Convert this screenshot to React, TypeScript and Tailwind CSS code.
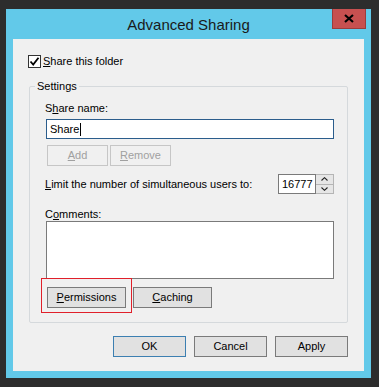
import React from "react";

function Btn({ children, w = 73, disabled = false, primary = false }: { children: React.ReactNode; w?: number; disabled?: boolean; primary?: boolean }) {
  const base = "h-[21px] flex items-center justify-center text-[11px] leading-none";
  let cls = "";
  if (disabled) cls = "bg-[#f0f0f0] border border-[#c6c6c6] text-[#a0a0a0]";
  else if (primary) cls = "bg-[#e1e1e1] border border-[#3c7fb1] text-black";
  else cls = "bg-[#e1e1e1] border border-[#7a7a7a] text-black";
  return (
    <div className={`${base} ${cls}`} style={{ width: w }}>
      {children}
    </div>
  );
}

export default function App() {
  return (
    <div className="w-[379px] h-[387px] bg-[#2d2d2d] pt-[9px] pl-[6px] font-['Liberation_Sans',Arial,sans-serif] text-black">
      <div className="w-[365px] h-[369px] bg-[#62c9e9] flex flex-col px-[7px] pb-[7px]">
        {/* Title bar */}
        <div className="relative h-[30px] flex items-center justify-center">
          <span className="text-[15px] leading-none text-[#1a1a1a] pt-[1px]">Advanced Sharing</span>
          <div className="absolute right-[-2px] top-[0px] w-[34px] h-[20px] bg-[#c75050] border border-[#9b3c3c] border-t-0 flex items-center justify-center">
            <svg width="10" height="9" viewBox="0 0 10 9">
              <path d="M1 1 L9 8 M9 1 L1 8" stroke="#000" strokeWidth="2.2" />
            </svg>
          </div>
        </div>
        {/* Client */}
        <div className="flex-1 bg-[#f0f0f0] flex flex-col">
          <div className="mt-[16px] ml-[15px] flex items-center h-[13px]">
            <div className="w-[13px] h-[13px] bg-white border border-[#333] flex items-center justify-center">
              <svg width="11" height="11" viewBox="0 0 11 11">
                <path d="M1.5 5.5 L4.2 8.5 L9.5 1.8" stroke="#000" strokeWidth="1.8" fill="none" />
              </svg>
            </div>
            <span className="ml-[2px] text-[11px] leading-none">
              <u>S</u>hare this folder
            </span>
          </div>

          {/* Group box */}
          <div className="relative mt-[18px] ml-[16px] w-[319px] h-[237px] border border-[#d5d9dc] rounded-[2px] flex flex-col pl-[15px]">
            <span className="absolute left-[5px] top-[-7px] px-[2px] bg-[#f0f0f0] text-[11px] leading-[13px]">Settings</span>
            <div className="mt-[14px] h-[15px] text-[11px] leading-[15px]">
              S<u>h</u>are name:
            </div>
            <div className="mt-[3px] ml-[1px] w-[288px] h-[20px] bg-white border border-[#2b5d8c] flex items-center pl-[3px] text-[11px]">
              <span>Share</span>
              <span className="w-[1px] h-[13px] bg-black ml-[1px]"></span>
            </div>
            <div className="mt-[6px] ml-[2px] flex gap-[2px]">
              <Btn w={61} disabled>
                <span><u>A</u>dd</span>
              </Btn>
              <Btn w={61} disabled>
                <span><u>R</u>emove</span>
              </Btn>
            </div>
            <div className="mt-[8px] ml-[0px] w-[288px] flex items-center justify-between h-[20px]">
              <span className="text-[11px] leading-none"><u>L</u>imit the number of simultaneous users to:</span>
              <div className="flex h-[20px] mr-[-1px]">
                <div className="w-[38px] h-[20px] bg-white border border-[#7a7a7a] whitespace-nowrap text-[11px] leading-[18px] pl-[3px]">
                  16777
                </div>
                <div className="w-[18px] h-[20px] flex flex-col border border-l-0 border-[#b5b5b5] bg-[#e6e6e6]">
                  <div className="flex-1 flex items-center justify-center border-b border-[#b5b5b5]">
                    <svg width="7" height="4" viewBox="0 0 7 4">
                      <path d="M0.5 3.5 L3.5 0.7 L6.5 3.5" stroke="#222" strokeWidth="1.1" fill="none" />
                    </svg>
                  </div>
                  <div className="flex-1 flex items-center justify-center">
                    <svg width="7" height="4" viewBox="0 0 7 4">
                      <path d="M0.5 0.5 L3.5 3.3 L6.5 0.5" stroke="#222" strokeWidth="1.1" fill="none" />
                    </svg>
                  </div>
                </div>
              </div>
            </div>
            <div className="mt-[13px] h-[14px] text-[11px] leading-[14px]">
              C<u>o</u>mments:
            </div>
            <div className="ml-[1px] w-[288px] h-[58px] bg-white border border-[#7a7a7a]"></div>
            <div className="mt-[8px] ml-[2px] flex gap-[7px]">
              <div className="relative">
                <div className="absolute left-[-6px] top-[-9px] w-[91px] h-[35px] border border-[#e0202a]"></div>
                <Btn w={79}>
                  <span><u>P</u>ermissions</span>
                </Btn>
              </div>
              <Btn w={79}>
                <span><u>C</u>aching</span>
              </Btn>
            </div>
          </div>

          {/* Bottom buttons */}
          <div className="mt-[13px] flex justify-end gap-[8px] pr-[16px]">
            <Btn primary>OK</Btn>
            <Btn>Cancel</Btn>
            <Btn>Apply</Btn>
          </div>
        </div>
      </div>
    </div>
  );
}
